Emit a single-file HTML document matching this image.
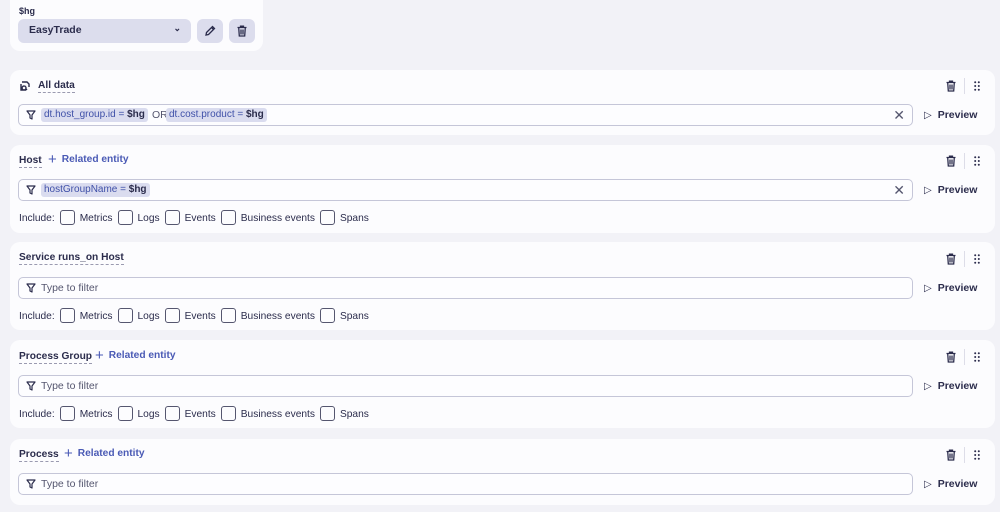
<!DOCTYPE html>
<html><head><style>
*{box-sizing:border-box;margin:0;padding:0}
body{width:1000px;height:512px;background:#f2f2f7;font-family:"Liberation Sans",sans-serif;font-size:10.5px;color:#2b2c4c;position:relative;overflow:hidden}
.card{position:absolute;background:#fcfcfe;border-radius:10px}
.abs{position:absolute}
.title{position:absolute;left:9px;font-weight:bold;border-bottom:1px dashed #9a9ab0;line-height:12px;font-size:10.2px}
.rel{position:absolute;color:#4a5ab5;font-weight:bold;line-height:12px;font-size:10.2px}
.rel b{font-size:15px;font-weight:normal;margin-right:5px;vertical-align:-2px}
.inp{position:absolute;left:8px;width:895px;height:22px;border:1px solid #c5c6d8;border-radius:5px;background:#fdfdff}
.inp .ph{position:absolute;left:22px;top:4px;color:#55566f}
.funnel{position:absolute;left:7px;top:5px}
.chip{position:absolute;top:3px;background:#dadcef;color:#3f50a8;border-radius:3px;padding:1px 3px;line-height:12px;font-size:10px;white-space:nowrap}
.chip span{color:#2b2c4c;font-weight:bold}
.x{position:absolute;right:7px;top:2px;font-size:14px;color:#55566f}
.prev{position:absolute;left:914px;font-weight:bold;line-height:12px}
.prev i{font-style:normal;font-weight:normal;margin-right:6px;font-size:10px}
.trash{position:absolute;left:935px}
.sep{position:absolute;left:954px;width:1px;height:16px;background:#dddde8}
.grip{position:absolute;left:964px}
.inc{position:absolute;left:9px;line-height:14px;font-size:10.2px;white-space:nowrap}
.inc .cb{display:inline-block;width:15px;height:15px;border:1.3px solid #55566f;border-radius:3px;vertical-align:-4px;margin:0 5px 0 5px}
</style></head><body>
<svg width="0" height="0" style="position:absolute"><defs>
<symbol id="tr" viewBox="0 0 12 12"><path d="M1.5 2.5h9M4.5 2.5V1.2h3v1.3M2.7 2.5l.6 8.5h5.4l.6-8.5M5 4.5v5M7 4.5v5" fill="none" stroke="#2b2c4c" stroke-width="1.3"/></symbol>
<symbol id="gr" viewBox="0 0 6 10"><g fill="#2b2c4c"><circle cx="1.2" cy="1.2" r="1"/><circle cx="4.8" cy="1.2" r="1"/><circle cx="1.2" cy="5" r="1"/><circle cx="4.8" cy="5" r="1"/><circle cx="1.2" cy="8.8" r="1"/><circle cx="4.8" cy="8.8" r="1"/></g></symbol>
<symbol id="fn" viewBox="0 0 10 10"><path d="M1 1h8L6 5v4L4 8V5z" fill="none" stroke="#2b2c4c" stroke-width="1.2" stroke-linejoin="round"/></symbol>
</defs></svg>

<div class="card" style="left:10px;top:-10px;width:253px;height:61px">
<div class="abs" style="left:9px;top:16px;font-weight:bold;font-size:9px">$hg</div>
<div class="abs" style="left:8px;top:29px;width:173px;height:24px;background:#dcdded;border-radius:6px;padding:5px 0 0 11px;font-weight:bold">EasyTrade<span class="abs" style="right:10px;top:4px;font-size:9px">&#8964;</span></div>
<div class="abs" style="left:187px;top:29px;width:26px;height:24px;background:#dcdded;border-radius:6px"><svg class="abs" style="left:7px;top:6px" width="12" height="12" viewBox="0 0 12 12"><path d="M2 10l.5-2.5L8.5 1.5l2 2-6 6zM7.5 2.5l2 2" fill="none" stroke="#2b2c4c" stroke-width="1.3"/></svg></div>
<div class="abs" style="left:219px;top:29px;width:26px;height:24px;background:#dcdded;border-radius:6px"><svg class="abs" style="left:7px;top:6px" width="12" height="12"><use href="#tr"/></svg></div>
</div>

<div class="card" style="left:10px;top:70px;width:985px;height:65px">
<svg class="abs" style="left:9px;top:10px" width="12" height="12" viewBox="0 0 12 12"><path d="M3 2h5l2 2v3M2 4v6h5M5 6a2 2 0 1 0 .1 0M6.5 8.5L8 10" fill="none" stroke="#2b2c4c" stroke-width="1.4"/></svg>
<div class="title" style="left:28px;top:10px">All data</div>
<svg class="trash" style="top:10px" width="12" height="12"><use href="#tr"/></svg><div class="sep" style="top:8px"></div><svg class="grip" style="top:11px" width="6" height="10"><use href="#gr"/></svg>
<div class="inp" style="top:34px"><svg class="funnel" width="10" height="10"><use href="#fn"/></svg>
<div class="chip" style="left:22px">dt.host_group.id = <span>$hg</span></div><div class="abs" style="left:133px;top:4px;color:#55566f">OR</div><div class="chip" style="left:147px">dt.cost.product = <span>$hg</span></div><div class="x">✕</div></div>
<div class="prev" style="top:39px"><i>▷</i>Preview</div>
</div>

<div class="card" style="left:10px;top:145px;width:985px;height:88px">
<div class="title" style="top:10px">Host</div><div class="rel" style="left:38px;top:9px"><b>+</b>Related entity</div>
<svg class="trash" style="top:10px" width="12" height="12"><use href="#tr"/></svg><div class="sep" style="top:8px"></div><svg class="grip" style="top:11px" width="6" height="10"><use href="#gr"/></svg>
<div class="inp" style="top:34px"><svg class="funnel" width="10" height="10"><use href="#fn"/></svg><div class="chip" style="left:22px">hostGroupName = <span>$hg</span></div><div class="x">✕</div></div>
<div class="prev" style="top:39px"><i>▷</i>Preview</div>
<div class="inc" style="top:65px">Include:<span class="cb"></span>Metrics<span class="cb"></span>Logs<span class="cb"></span>Events<span class="cb"></span>Business events<span class="cb"></span>Spans</div>
</div>

<div class="card" style="left:10px;top:242px;width:985px;height:88px">
<div class="title" style="top:10px">Service runs_on Host</div>
<svg class="trash" style="top:11px" width="12" height="12"><use href="#tr"/></svg><div class="sep" style="top:9px"></div><svg class="grip" style="top:12px" width="6" height="10"><use href="#gr"/></svg>
<div class="inp" style="top:35px"><svg class="funnel" width="10" height="10"><use href="#fn"/></svg><div class="ph">Type to filter</div></div>
<div class="prev" style="top:40px"><i>▷</i>Preview</div>
<div class="inc" style="top:66px">Include:<span class="cb"></span>Metrics<span class="cb"></span>Logs<span class="cb"></span>Events<span class="cb"></span>Business events<span class="cb"></span>Spans</div>
</div>

<div class="card" style="left:10px;top:340px;width:985px;height:88px">
<div class="title" style="top:11px">Process Group</div><div class="rel" style="left:85px;top:10px"><b>+</b>Related entity</div>
<svg class="trash" style="top:11px" width="12" height="12"><use href="#tr"/></svg><div class="sep" style="top:9px"></div><svg class="grip" style="top:12px" width="6" height="10"><use href="#gr"/></svg>
<div class="inp" style="top:35px"><svg class="funnel" width="10" height="10"><use href="#fn"/></svg><div class="ph">Type to filter</div></div>
<div class="prev" style="top:40px"><i>▷</i>Preview</div>
<div class="inc" style="top:66px">Include:<span class="cb"></span>Metrics<span class="cb"></span>Logs<span class="cb"></span>Events<span class="cb"></span>Business events<span class="cb"></span>Spans</div>
</div>

<div class="card" style="left:10px;top:439px;width:985px;height:66px">
<div class="title" style="top:10px">Process</div><div class="rel" style="left:54px;top:9px"><b>+</b>Related entity</div>
<svg class="trash" style="top:10px" width="12" height="12"><use href="#tr"/></svg><div class="sep" style="top:8px"></div><svg class="grip" style="top:11px" width="6" height="10"><use href="#gr"/></svg>
<div class="inp" style="top:34px"><svg class="funnel" width="10" height="10"><use href="#fn"/></svg><div class="ph">Type to filter</div></div>
<div class="prev" style="top:39px"><i>▷</i>Preview</div>
</div>
</body></html>
